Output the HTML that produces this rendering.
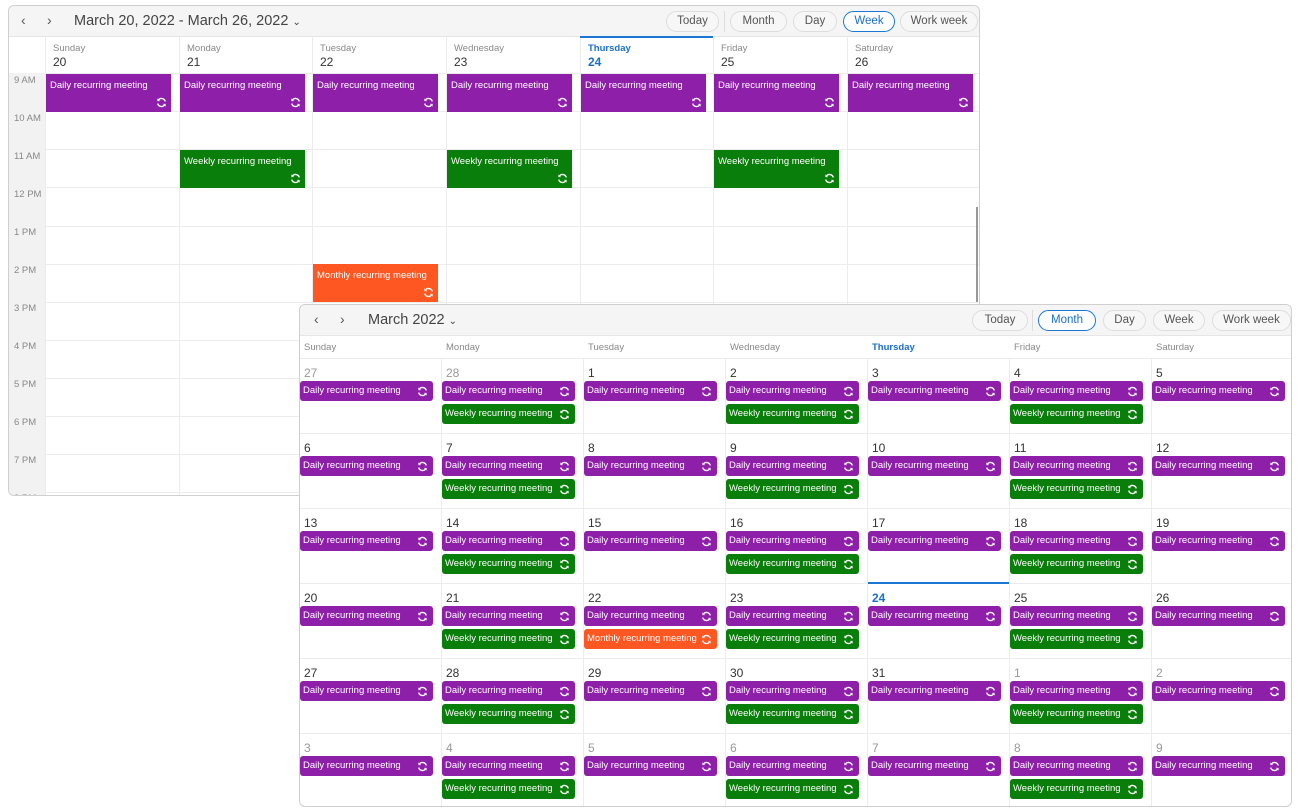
<!DOCTYPE html>
<html><head><meta charset="utf-8"><style>
*{box-sizing:border-box;margin:0;padding:0}
body{width:1300px;height:810px;background:#fff;position:relative;overflow:hidden;font-family:"Liberation Sans",sans-serif;}
.win{position:absolute;background:#fff;border:1px solid #cfcfcf;border-radius:6px;overflow:hidden}
.hdr{position:absolute;left:0;right:0;top:0;height:31px;background:#f5f5f5;border-bottom:1px solid #e6e6e6}
.nav{position:absolute;top:6px;font-size:14px;color:#555}
.title{position:absolute;top:7px;font-size:14.5px;color:#444}
.btn{position:absolute;top:5px;height:21px;border:1px solid #ddd;border-radius:11px;background:#f7f7f7;font-size:11.5px;color:#555;text-align:center;line-height:19px}
.btn.sel{border-color:#1a78d4;color:#1a6fc8;background:#fff}
.sep{position:absolute;top:5px;width:1px;height:21px;background:#ddd}
.a{position:absolute}
.vl{position:absolute;width:1px;background:#ececec}
.hl{position:absolute;height:1px;background:#ececec}
.dn{position:absolute;font-size:9.5px;color:#888}
.dd{position:absolute;font-size:12px;color:#333}
.tl{position:absolute;font-size:9.5px;color:#888;left:5px}
.ev{position:absolute;color:#fff;font-size:9.5px;overflow:hidden}
.ev svg{position:absolute;width:11px;height:11px}
.p{background:#8e1fa8}.g{background:#0a7e0a}.o{background:#ff5722}
.w .ev{height:38px;padding:6px 4px;line-height:12px}
.w .ev svg{right:4px;bottom:4px}
.m .ev{height:20px;border-radius:3px;padding:0 3px;line-height:20px}
.m .ev svg{right:5px;top:4.5px}
.gr{color:#999}
</style></head><body>
<svg width="0" height="0" style="position:absolute"><defs><symbol id="r" viewBox="0 0 16 16"><path d="M13.5 6.5A5.6 5.6 0 0 0 3.2 5M2.5 9.5A5.6 5.6 0 0 0 12.8 11" fill="none" stroke="#fff" stroke-width="2"/><path d="M2 2v4h4z M14 14v-4h-4z" fill="#fff"/></symbol></defs></svg>

<!-- Week window -->
<div class="win w" style="left:8px;top:5px;width:972px;height:491px">
<div class="hdr"></div>
<div class="nav" style="left:12px">&#8249;</div><div class="nav" style="left:38px">&#8250;</div>
<div class="title" style="left:65px">March 20, 2022 - March 26, 2022 <span style="font-size:10px">&#8964;</span></div>
<div class="btn" style="left:657px;width:53px">Today</div><div class="sep" style="left:715px"></div>
<div class="btn" style="left:721px;width:57px">Month</div>
<div class="btn" style="left:784px;width:44px">Day</div>
<div class="btn sel" style="left:834px;width:52px">Week</div>
<div class="btn" style="left:891px;width:78px">Work week</div>
<div class="a" style="left:0;top:67px;width:36px;height:430px;background:#f2f2f2"></div>
<div class="vl" style="left:36px;top:31px;height:460px"></div>
<div class="vl" style="left:170px;top:31px;height:460px"></div>
<div class="vl" style="left:303px;top:31px;height:460px"></div>
<div class="vl" style="left:437px;top:31px;height:460px"></div>
<div class="vl" style="left:571px;top:31px;height:460px"></div>
<div class="vl" style="left:704px;top:31px;height:460px"></div>
<div class="vl" style="left:838px;top:31px;height:460px"></div>
<div class="a" style="left:571px;top:30px;width:133px;height:2px;background:#1a78d4"></div>
<div class="hl" style="left:36px;right:0;top:67px"></div>
<div class="hl" style="left:36px;right:0;top:105px"></div>
<div class="hl" style="left:36px;right:0;top:143px"></div>
<div class="hl" style="left:36px;right:0;top:181px"></div>
<div class="hl" style="left:36px;right:0;top:220px"></div>
<div class="hl" style="left:36px;right:0;top:258px"></div>
<div class="hl" style="left:36px;right:0;top:296px"></div>
<div class="hl" style="left:36px;right:0;top:334px"></div>
<div class="hl" style="left:36px;right:0;top:372px"></div>
<div class="hl" style="left:36px;right:0;top:410px"></div>
<div class="hl" style="left:36px;right:0;top:448px"></div>
<div class="hl" style="left:36px;right:0;top:486px"></div>
<div class="dn" style="left:44px;top:37px">Sunday</div><div class="dd" style="left:44px;top:49px">20</div>
<div class="dn" style="left:178px;top:37px">Monday</div><div class="dd" style="left:178px;top:49px">21</div>
<div class="dn" style="left:311px;top:37px">Tuesday</div><div class="dd" style="left:311px;top:49px">22</div>
<div class="dn" style="left:445px;top:37px">Wednesday</div><div class="dd" style="left:445px;top:49px">23</div>
<div class="dn" style="left:579px;top:37px;color:#1a6fc8;font-weight:bold">Thursday</div><div class="dd" style="left:579px;top:49px;color:#1a6fc8;font-weight:bold">24</div>
<div class="dn" style="left:712px;top:37px">Friday</div><div class="dd" style="left:712px;top:49px">25</div>
<div class="dn" style="left:846px;top:37px">Saturday</div><div class="dd" style="left:846px;top:49px">26</div>
<div class="tl" style="top:69px">9 AM</div><div class="tl" style="top:107px">10 AM</div><div class="tl" style="top:145px">11 AM</div><div class="tl" style="top:183px">12 PM</div><div class="tl" style="top:221px">1 PM</div><div class="tl" style="top:259px">2 PM</div><div class="tl" style="top:297px">3 PM</div><div class="tl" style="top:335px">4 PM</div><div class="tl" style="top:373px">5 PM</div><div class="tl" style="top:411px">6 PM</div><div class="tl" style="top:449px">7 PM</div><div class="tl" style="top:487px">8 PM</div>
<div class="ev p" style="left:37px;top:68px;width:125px">Daily recurring meeting<svg><use href="#r"/></svg></div>
<div class="ev p" style="left:171px;top:68px;width:125px">Daily recurring meeting<svg><use href="#r"/></svg></div>
<div class="ev p" style="left:304px;top:68px;width:125px">Daily recurring meeting<svg><use href="#r"/></svg></div>
<div class="ev p" style="left:438px;top:68px;width:125px">Daily recurring meeting<svg><use href="#r"/></svg></div>
<div class="ev p" style="left:572px;top:68px;width:125px">Daily recurring meeting<svg><use href="#r"/></svg></div>
<div class="ev p" style="left:705px;top:68px;width:125px">Daily recurring meeting<svg><use href="#r"/></svg></div>
<div class="ev p" style="left:839px;top:68px;width:125px">Daily recurring meeting<svg><use href="#r"/></svg></div>
<div class="ev g" style="left:171px;top:144px;width:125px">Weekly recurring meeting<svg><use href="#r"/></svg></div>
<div class="ev g" style="left:438px;top:144px;width:125px">Weekly recurring meeting<svg><use href="#r"/></svg></div>
<div class="ev g" style="left:705px;top:144px;width:125px">Weekly recurring meeting<svg><use href="#r"/></svg></div>
<div class="ev o" style="left:304px;top:258px;width:125px">Monthly recurring meeting<svg><use href="#r"/></svg></div>
<div class="a" style="left:967px;top:201px;width:2px;height:95px;background:#999"></div>
</div>

<!-- Month window -->
<div class="win m" style="left:299px;top:304px;width:993px;height:503px">
<div class="hdr"></div>
<div class="nav" style="left:14px">&#8249;</div><div class="nav" style="left:40px">&#8250;</div>
<div class="title" style="left:68px">March 2022 <span style="font-size:10px">&#8964;</span></div>
<div class="btn" style="left:672px;width:56px">Today</div><div class="sep" style="left:732px"></div>
<div class="btn sel" style="left:738px;width:58px">Month</div>
<div class="btn" style="left:803px;width:43px">Day</div>
<div class="btn" style="left:853px;width:52px">Week</div>
<div class="btn" style="left:912px;width:79px">Work week</div>
<div class="dn" style="left:4px;top:37px">Sunday</div>
<div class="dn" style="left:146px;top:37px">Monday</div>
<div class="dn" style="left:288px;top:37px">Tuesday</div>
<div class="dn" style="left:430px;top:37px">Wednesday</div>
<div class="dn" style="left:572px;top:37px;color:#1a6fc8;font-weight:bold">Thursday</div>
<div class="dn" style="left:714px;top:37px">Friday</div>
<div class="dn" style="left:856px;top:37px">Saturday</div>
<div class="hl" style="left:0;right:0;top:53px"></div>
<div class="hl" style="left:0;right:0;top:128px"></div>
<div class="hl" style="left:0;right:0;top:203px"></div>
<div class="hl" style="left:0;right:0;top:278px"></div>
<div class="hl" style="left:0;right:0;top:353px"></div>
<div class="hl" style="left:0;right:0;top:428px"></div>
<div class="vl" style="left:141px;top:53px;height:450px"></div>
<div class="vl" style="left:283px;top:53px;height:450px"></div>
<div class="vl" style="left:425px;top:53px;height:450px"></div>
<div class="vl" style="left:567px;top:53px;height:450px"></div>
<div class="vl" style="left:709px;top:53px;height:450px"></div>
<div class="vl" style="left:851px;top:53px;height:450px"></div>
<div class="a" style="left:568px;top:277px;width:141px;height:2px;background:#1a78d4"></div>

<!-- row 1 (top 53) -->
<div class="dd gr" style="left:4px;top:61px">27</div><div class="dd gr" style="left:146px;top:61px">28</div><div class="dd" style="left:288px;top:61px">1</div><div class="dd" style="left:430px;top:61px">2</div><div class="dd" style="left:572px;top:61px">3</div><div class="dd" style="left:714px;top:61px">4</div><div class="dd" style="left:856px;top:61px">5</div>
<div class="ev p" style="left:0;top:76px;width:133px">Daily recurring meeting<svg><use href="#r"/></svg></div>
<div class="ev p" style="left:142px;top:76px;width:133px">Daily recurring meeting<svg><use href="#r"/></svg></div>
<div class="ev p" style="left:284px;top:76px;width:133px">Daily recurring meeting<svg><use href="#r"/></svg></div>
<div class="ev p" style="left:426px;top:76px;width:133px">Daily recurring meeting<svg><use href="#r"/></svg></div>
<div class="ev p" style="left:568px;top:76px;width:133px">Daily recurring meeting<svg><use href="#r"/></svg></div>
<div class="ev p" style="left:710px;top:76px;width:133px">Daily recurring meeting<svg><use href="#r"/></svg></div>
<div class="ev p" style="left:852px;top:76px;width:133px">Daily recurring meeting<svg><use href="#r"/></svg></div>
<div class="ev g" style="left:142px;top:99px;width:133px">Weekly recurring meeting<svg><use href="#r"/></svg></div>
<div class="ev g" style="left:426px;top:99px;width:133px">Weekly recurring meeting<svg><use href="#r"/></svg></div>
<div class="ev g" style="left:710px;top:99px;width:133px">Weekly recurring meeting<svg><use href="#r"/></svg></div>

<!-- row 2 -->
<div class="dd" style="left:4px;top:136px">6</div><div class="dd" style="left:146px;top:136px">7</div><div class="dd" style="left:288px;top:136px">8</div><div class="dd" style="left:430px;top:136px">9</div><div class="dd" style="left:572px;top:136px">10</div><div class="dd" style="left:714px;top:136px">11</div><div class="dd" style="left:856px;top:136px">12</div>
<div class="ev p" style="left:0;top:151px;width:133px">Daily recurring meeting<svg><use href="#r"/></svg></div>
<div class="ev p" style="left:142px;top:151px;width:133px">Daily recurring meeting<svg><use href="#r"/></svg></div>
<div class="ev p" style="left:284px;top:151px;width:133px">Daily recurring meeting<svg><use href="#r"/></svg></div>
<div class="ev p" style="left:426px;top:151px;width:133px">Daily recurring meeting<svg><use href="#r"/></svg></div>
<div class="ev p" style="left:568px;top:151px;width:133px">Daily recurring meeting<svg><use href="#r"/></svg></div>
<div class="ev p" style="left:710px;top:151px;width:133px">Daily recurring meeting<svg><use href="#r"/></svg></div>
<div class="ev p" style="left:852px;top:151px;width:133px">Daily recurring meeting<svg><use href="#r"/></svg></div>
<div class="ev g" style="left:142px;top:174px;width:133px">Weekly recurring meeting<svg><use href="#r"/></svg></div>
<div class="ev g" style="left:426px;top:174px;width:133px">Weekly recurring meeting<svg><use href="#r"/></svg></div>
<div class="ev g" style="left:710px;top:174px;width:133px">Weekly recurring meeting<svg><use href="#r"/></svg></div>

<!-- row 3 -->
<div class="dd" style="left:4px;top:211px">13</div><div class="dd" style="left:146px;top:211px">14</div><div class="dd" style="left:288px;top:211px">15</div><div class="dd" style="left:430px;top:211px">16</div><div class="dd" style="left:572px;top:211px">17</div><div class="dd" style="left:714px;top:211px">18</div><div class="dd" style="left:856px;top:211px">19</div>
<div class="ev p" style="left:0;top:226px;width:133px">Daily recurring meeting<svg><use href="#r"/></svg></div>
<div class="ev p" style="left:142px;top:226px;width:133px">Daily recurring meeting<svg><use href="#r"/></svg></div>
<div class="ev p" style="left:284px;top:226px;width:133px">Daily recurring meeting<svg><use href="#r"/></svg></div>
<div class="ev p" style="left:426px;top:226px;width:133px">Daily recurring meeting<svg><use href="#r"/></svg></div>
<div class="ev p" style="left:568px;top:226px;width:133px">Daily recurring meeting<svg><use href="#r"/></svg></div>
<div class="ev p" style="left:710px;top:226px;width:133px">Daily recurring meeting<svg><use href="#r"/></svg></div>
<div class="ev p" style="left:852px;top:226px;width:133px">Daily recurring meeting<svg><use href="#r"/></svg></div>
<div class="ev g" style="left:142px;top:249px;width:133px">Weekly recurring meeting<svg><use href="#r"/></svg></div>
<div class="ev g" style="left:426px;top:249px;width:133px">Weekly recurring meeting<svg><use href="#r"/></svg></div>
<div class="ev g" style="left:710px;top:249px;width:133px">Weekly recurring meeting<svg><use href="#r"/></svg></div>

<!-- row 4 -->
<div class="dd" style="left:4px;top:286px">20</div><div class="dd" style="left:146px;top:286px">21</div><div class="dd" style="left:288px;top:286px">22</div><div class="dd" style="left:430px;top:286px">23</div><div class="dd" style="left:572px;top:286px;color:#1a6fc8;font-weight:bold">24</div><div class="dd" style="left:714px;top:286px">25</div><div class="dd" style="left:856px;top:286px">26</div>
<div class="ev p" style="left:0;top:301px;width:133px">Daily recurring meeting<svg><use href="#r"/></svg></div>
<div class="ev p" style="left:142px;top:301px;width:133px">Daily recurring meeting<svg><use href="#r"/></svg></div>
<div class="ev p" style="left:284px;top:301px;width:133px">Daily recurring meeting<svg><use href="#r"/></svg></div>
<div class="ev p" style="left:426px;top:301px;width:133px">Daily recurring meeting<svg><use href="#r"/></svg></div>
<div class="ev p" style="left:568px;top:301px;width:133px">Daily recurring meeting<svg><use href="#r"/></svg></div>
<div class="ev p" style="left:710px;top:301px;width:133px">Daily recurring meeting<svg><use href="#r"/></svg></div>
<div class="ev p" style="left:852px;top:301px;width:133px">Daily recurring meeting<svg><use href="#r"/></svg></div>
<div class="ev g" style="left:142px;top:324px;width:133px">Weekly recurring meeting<svg><use href="#r"/></svg></div>
<div class="ev o" style="left:284px;top:324px;width:133px">Monthly recurring meeting<svg><use href="#r"/></svg></div>
<div class="ev g" style="left:426px;top:324px;width:133px">Weekly recurring meeting<svg><use href="#r"/></svg></div>
<div class="ev g" style="left:710px;top:324px;width:133px">Weekly recurring meeting<svg><use href="#r"/></svg></div>

<!-- row 5 -->
<div class="dd" style="left:4px;top:361px">27</div><div class="dd" style="left:146px;top:361px">28</div><div class="dd" style="left:288px;top:361px">29</div><div class="dd" style="left:430px;top:361px">30</div><div class="dd" style="left:572px;top:361px">31</div><div class="dd gr" style="left:714px;top:361px">1</div><div class="dd gr" style="left:856px;top:361px">2</div>
<div class="ev p" style="left:0;top:376px;width:133px">Daily recurring meeting<svg><use href="#r"/></svg></div>
<div class="ev p" style="left:142px;top:376px;width:133px">Daily recurring meeting<svg><use href="#r"/></svg></div>
<div class="ev p" style="left:284px;top:376px;width:133px">Daily recurring meeting<svg><use href="#r"/></svg></div>
<div class="ev p" style="left:426px;top:376px;width:133px">Daily recurring meeting<svg><use href="#r"/></svg></div>
<div class="ev p" style="left:568px;top:376px;width:133px">Daily recurring meeting<svg><use href="#r"/></svg></div>
<div class="ev p" style="left:710px;top:376px;width:133px">Daily recurring meeting<svg><use href="#r"/></svg></div>
<div class="ev p" style="left:852px;top:376px;width:133px">Daily recurring meeting<svg><use href="#r"/></svg></div>
<div class="ev g" style="left:142px;top:399px;width:133px">Weekly recurring meeting<svg><use href="#r"/></svg></div>
<div class="ev g" style="left:426px;top:399px;width:133px">Weekly recurring meeting<svg><use href="#r"/></svg></div>
<div class="ev g" style="left:710px;top:399px;width:133px">Weekly recurring meeting<svg><use href="#r"/></svg></div>

<!-- row 6 -->
<div class="dd gr" style="left:4px;top:436px">3</div><div class="dd gr" style="left:146px;top:436px">4</div><div class="dd gr" style="left:288px;top:436px">5</div><div class="dd gr" style="left:430px;top:436px">6</div><div class="dd gr" style="left:572px;top:436px">7</div><div class="dd gr" style="left:714px;top:436px">8</div><div class="dd gr" style="left:856px;top:436px">9</div>
<div class="ev p" style="left:0;top:451px;width:133px">Daily recurring meeting<svg><use href="#r"/></svg></div>
<div class="ev p" style="left:142px;top:451px;width:133px">Daily recurring meeting<svg><use href="#r"/></svg></div>
<div class="ev p" style="left:284px;top:451px;width:133px">Daily recurring meeting<svg><use href="#r"/></svg></div>
<div class="ev p" style="left:426px;top:451px;width:133px">Daily recurring meeting<svg><use href="#r"/></svg></div>
<div class="ev p" style="left:568px;top:451px;width:133px">Daily recurring meeting<svg><use href="#r"/></svg></div>
<div class="ev p" style="left:710px;top:451px;width:133px">Daily recurring meeting<svg><use href="#r"/></svg></div>
<div class="ev p" style="left:852px;top:451px;width:133px">Daily recurring meeting<svg><use href="#r"/></svg></div>
<div class="ev g" style="left:142px;top:474px;width:133px">Weekly recurring meeting<svg><use href="#r"/></svg></div>
<div class="ev g" style="left:426px;top:474px;width:133px">Weekly recurring meeting<svg><use href="#r"/></svg></div>
<div class="ev g" style="left:710px;top:474px;width:133px">Weekly recurring meeting<svg><use href="#r"/></svg></div>
</div>
</body></html>
